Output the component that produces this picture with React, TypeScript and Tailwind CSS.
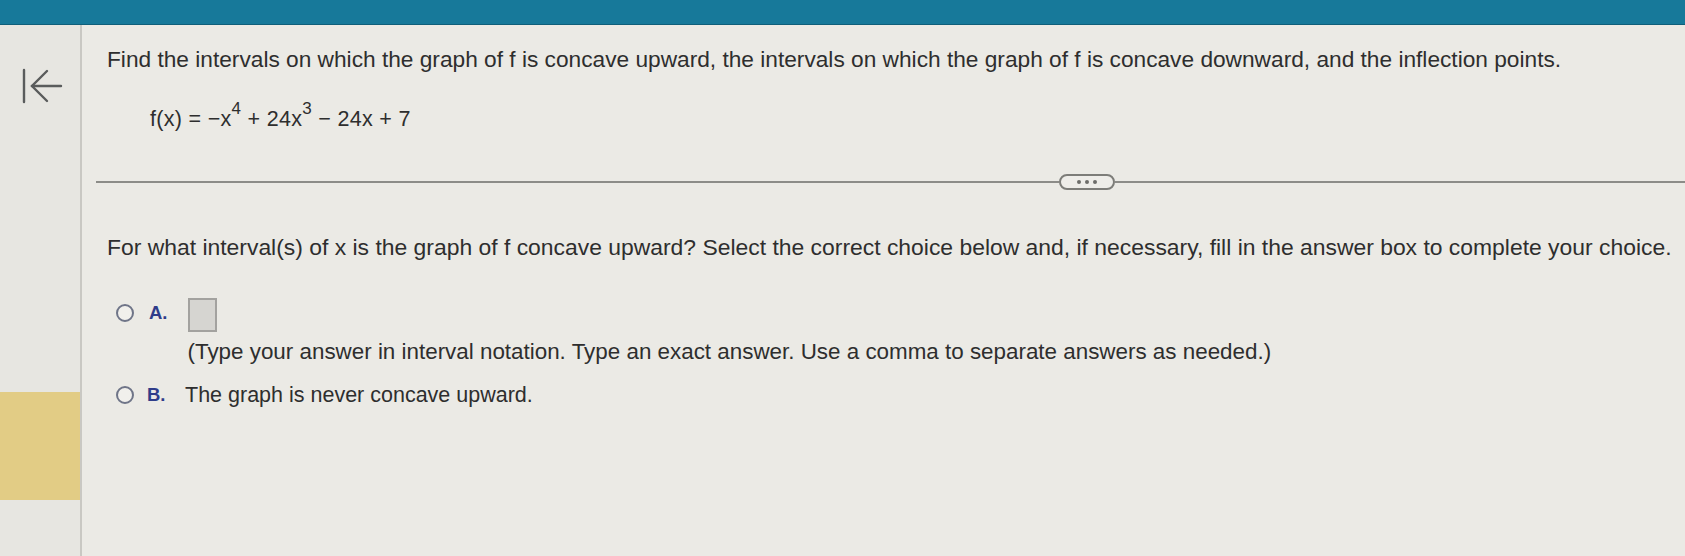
import React from 'react';

function BackIcon() {
  return (
    <svg width="44" height="40" viewBox="0 0 44 40" fill="none" stroke="#5a5c5c" strokeWidth="2.4" strokeLinecap="round">
      <path d="M3 4 V36" />
      <path d="M11 20 H40" />
      <path d="M26 5 L11 20 L26 35" />
    </svg>
  );
}

function Radio() {
  return <span className="inline-block w-[18px] h-[18px] rounded-full border-2 border-[#6f7588] bg-[#f1f0ec] shrink-0" />;
}

export default function App() {
  return (
    <div className="w-[1685px] h-[556px] bg-[#ebeae5] flex flex-col overflow-hidden" style={{ fontFamily: '"Liberation Sans", Arial, sans-serif' }}>
      <div className="h-[25px] bg-[#17799a] border-b border-[#0f5f7a] shrink-0" />
      <div className="flex flex-1">
        {/* sidebar */}
        <aside className="w-[82px] shrink-0 border-r-2 border-[#c9c8c3] bg-[#e7e6e1] flex flex-col">
          <div className="pt-[41px] pl-[21px]">
            <BackIcon />
          </div>
          <div className="mt-[286px] h-[108px] bg-[#e2cc85]" />
        </aside>

        {/* main */}
        <main className="flex-1 flex flex-col text-[#2e2e2e]">
          <p className="pl-[25px] pt-[21px] text-[22.7px] leading-[26px] whitespace-nowrap">
            Find the intervals on which the graph of f is concave upward, the intervals on which the graph of f is concave downward, and the inflection points.
          </p>
          <p className="pl-[68px] mt-[34px] text-[21.5px] leading-[26px] whitespace-nowrap tracking-[0.3px]">
            f(x) = −x<sup className="text-[17px] top-[-0.7em]">4</sup> + 24x<sup className="text-[17px] top-[-0.7em]">3</sup> − 24x + 7
          </p>

          <div className="flex items-center pl-[14px] mt-[42px]">
            <div className="flex-1 h-[2px] bg-[#8c8c88]" />
            <div className="w-[56px] h-[16px] rounded-full border-2 border-[#7d7d79] bg-[#eeede9] flex items-center justify-center gap-[4px]">
              <span className="w-[4px] h-[4px] rounded-full bg-[#6d6d6a]" />
              <span className="w-[4px] h-[4px] rounded-full bg-[#6d6d6a]" />
              <span className="w-[4px] h-[4px] rounded-full bg-[#6d6d6a]" />
            </div>
            <div className="w-[570px] h-[2px] bg-[#8c8c88]" />
          </div>

          <p className="pl-[25px] mt-[43px] text-[22.9px] leading-[28px] whitespace-nowrap">
            For what interval(s) of x is the graph of f concave upward? Select the correct choice below and, if necessary, fill in the answer box to complete your choice.
          </p>

          <div className="flex items-start pl-[34px] mt-[34px]">
            <div className="flex items-center gap-[15px] mt-[4px]">
              <Radio />
              <span className="text-[18.5px] font-bold text-[#2f3d8a]">A.</span>
            </div>
            <div className="ml-[20px] flex flex-col">
              <div className="w-[29px] h-[34px] mt-[3px] border-2 border-[#a3a29f] bg-[#d6d5d1]" />
              <p className="mt-[7px] text-[22.4px] leading-[26px] whitespace-nowrap">
                (Type your answer in interval notation. Type an exact answer. Use a comma to separate answers as needed.)
              </p>
            </div>
          </div>

          <div className="flex items-center pl-[34px] mt-[16px]">
            <Radio />
            <span className="ml-[13px] text-[18.5px] font-bold text-[#2f3d8a] w-[38px]">B.</span>
            <span className="text-[21.5px] leading-[26px]">The graph is never concave upward.</span>
          </div>
        </main>
      </div>
    </div>
  );
}
